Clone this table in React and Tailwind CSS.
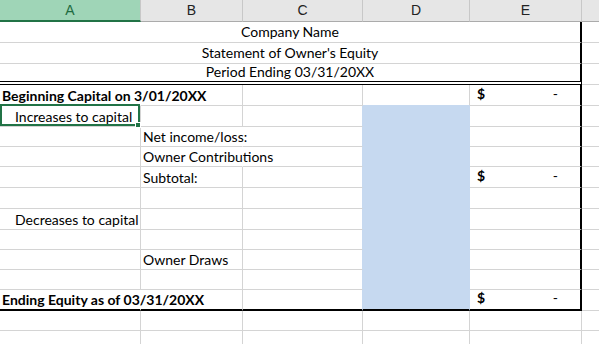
import React from 'react';

const GRID = 'border-[#d4d4d4]';
const FILL = 'bg-[#c6d9f0]';

// column widths include the 1px gridline on the right
const COLS = [
  { key: 'A', w: 'w-[141px]' },
  { key: 'B', w: 'w-[102px]' },
  { key: 'C', w: 'w-[120px]' },
  { key: 'D', w: 'w-[107px]' },
  { key: 'E', w: 'w-[112px]' },
];

const Money = () => (
  <div className="flex w-full items-end justify-between pl-[5px] pr-[22px]">
    <span className="font-bold">$</span>
    <span>-</span>
  </div>
);

// each body row: height plus what sits in A..E
const rows = [
  { h: 'h-[21px]', cells: { A: { text: 'Beginning Capital on 3/01/20XX', bold: true, open: true }, E: { money: true } }, dTop: true },
  { h: 'h-[21px]', cells: { A: { text: 'Increases to capital', indent: true } }, fill: true },
  { h: 'h-[20px]', cells: { B: { text: 'Net income/loss:', open: true } }, fill: true },
  { h: 'h-[20px]', cells: { B: { text: 'Owner Contributions', open: true } }, fill: true },
  { h: 'h-[21px]', cells: { B: { text: 'Subtotal:' }, E: { money: true } }, fill: true },
  { h: 'h-[21px]', cells: {}, fill: true },
  { h: 'h-[21px]', cells: { A: { text: 'Decreases to capital', indent: true } }, fill: true },
  { h: 'h-[20px]', cells: {}, fill: true },
  { h: 'h-[20px]', cells: { B: { text: 'Owner Draws' } }, fill: true },
  { h: 'h-[20px]', cells: {}, fill: true },
  { h: 'h-[21px]', cells: { A: { text: 'Ending Equity as of 03/31/20XX', bold: true, open: true }, E: { money: true } }, fill: true, last: true },
];

const HeaderRow = () => (
  <div className="flex h-[22px] font-['Liberation_Sans',sans-serif] text-[14px]">
    {COLS.map((c) => (
      <div
        key={c.key}
        className={
          c.key === 'A'
            ? `${c.w} flex items-center justify-center border-r border-b-2 border-r-[#c8c8c8] border-b-[#217346] bg-[#9fd5b7] pt-px text-[#1e6b40]`
            : `${c.w} flex items-center justify-center border-r border-b border-r-[#c8c8c8] border-b-[#ababab] bg-[#e6e6e6] text-[#222]`
        }
      >
        {c.key}
      </div>
    ))}
    <div className="flex-1 border-b border-b-[#ababab] bg-[#e6e6e6]" />
  </div>
);

const TitleRow = ({ text, double }) => (
  <div className="flex h-[21px]">
    <div
      className={
        double
          ? 'flex w-[582px] items-end justify-center border-r-2 border-b-4 border-double border-r-black border-b-black pb-[1px]'
          : `flex w-[582px] items-end justify-center border-r-2 border-b ${GRID} border-r-black pb-[2px]`
      }
    >
      <span className="leading-[16px]">{text}</span>
    </div>
    <div className={`flex-1 border-b ${GRID}`} />
  </div>
);

const BodyRow = ({ row }) => (
  <div className={`flex ${row.h}`}>
    {COLS.map((c) => {
      const cell = row.cells[c.key] || {};
      const isD = c.key === 'D';
      const isE = c.key === 'E';
      const isC = c.key === 'C';

      let right = 'border-r border-r-[#d4d4d4]';
      if (cell.open) right = 'border-r border-r-transparent';
      if (isC && row.fill) right = 'border-r border-r-[#c6d9f0]';
      if (isD && row.fill) right = 'border-r border-r-[#c6d9f0]';
      if (isE) right = 'border-r-2 border-r-black';

      let bottom = 'border-b border-b-[#d4d4d4]';
      if (isD && (row.fill || row.dTop)) bottom = 'border-b border-b-[#c6d9f0]';
      if (row.last) bottom = 'border-b-2 border-b-black';

      return (
        <div
          key={c.key}
          className={`${c.w} relative flex shrink-0 items-end whitespace-nowrap ${right} ${bottom} ${
            isD && row.fill ? FILL : ''
          } ${cell.indent ? 'pl-[15px]' : 'pl-[2px]'} pb-[1px]`}
        >
          {cell.money ? (
            <Money />
          ) : cell.text ? (
            <span className={`leading-[16px] ${cell.bold ? 'font-bold' : ''}`}>{cell.text}</span>
          ) : null}
        </div>
      );
    })}
    <div className={`flex-1 border-b ${GRID}`} />
  </div>
);

const BlankRow = ({ h }) => (
  <div className={`flex ${h}`}>
    {COLS.map((c) => (
      <div key={c.key} className={`${c.w} shrink-0 border-r border-b ${GRID}`} />
    ))}
    <div className={`flex-1 border-b ${GRID}`} />
  </div>
);

export default function App() {
  return (
    <div
      className="relative h-[344px] w-[599px] overflow-hidden bg-white text-[14px] text-black"
      style={{ fontFamily: 'Lato, "Open Sans", sans-serif' }}
    >
      <HeaderRow />
      <TitleRow text="Company Name" />
      <TitleRow text="Statement of Owner's Equity" />
      <TitleRow text="Period Ending 03/31/20XX" double />
      {rows.map((r, i) => (
        <BodyRow key={i} row={r} />
      ))}
      <BlankRow h="h-[20px]" />
      <BlankRow h="h-[21px]" />

      {/* active cell A5 */}
      <div className="pointer-events-none absolute left-0 top-[104px] h-[22px] w-[140px] border-2 border-[#217346]" />
      <div className="pointer-events-none absolute left-[135px] top-[122px] h-[6px] w-[6px] border border-white bg-[#217346]" />
    </div>
  );
}
